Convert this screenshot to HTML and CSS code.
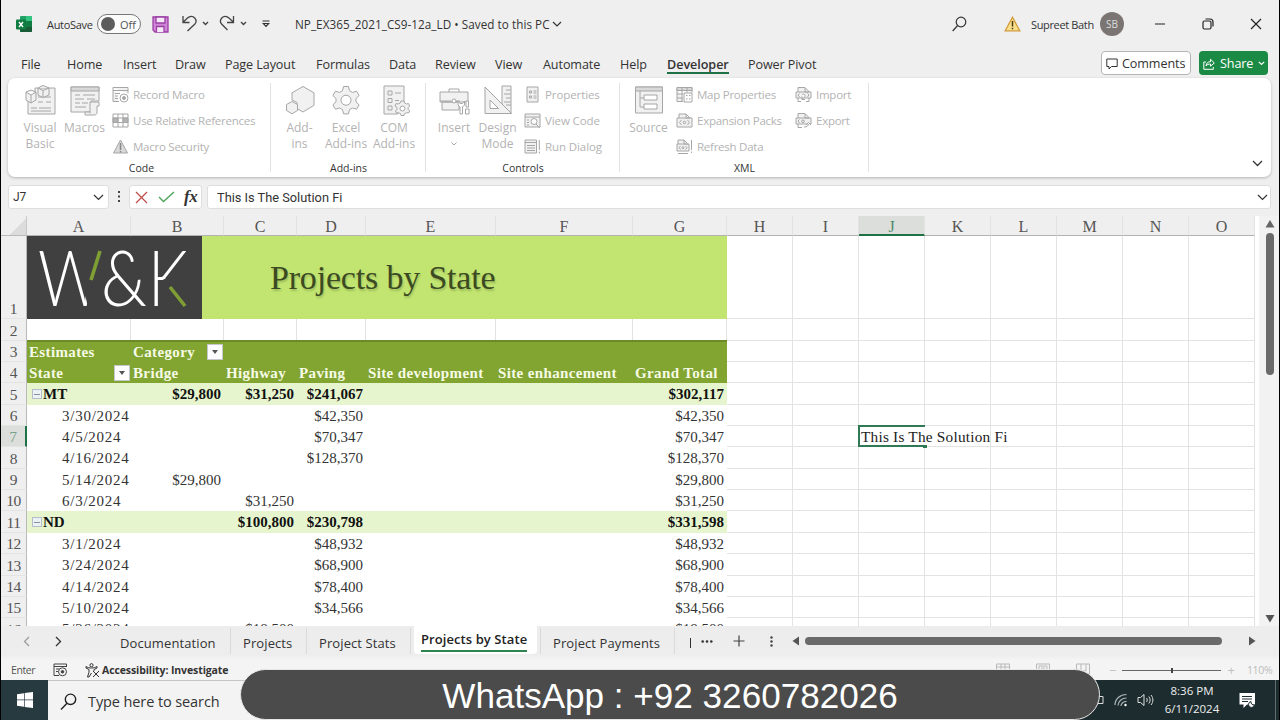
FILE: index.html
```html
<!DOCTYPE html>
<html lang="en">
<head>
  <meta charset="UTF-8">
  <title>NP_EX365_2021_CS9-12a_LD - Excel</title>
  <link rel="stylesheet" href="styles.css">
</head>
<body>

  <!-- TITLE BAR -->
  <div class="titlebar">
    <svg class="excel-logo" width="16" height="16" viewBox="0 0 16 16">
      <rect x="4" y="0" width="12" height="16" rx="1" fill="#21a366"/>
      <rect x="10" y="0" width="6" height="5" fill="#33c481"/>
      <rect x="4" y="8" width="12" height="8" rx="1" fill="#185c37"/>
      <rect x="10" y="5" width="6" height="6" fill="#107c41"/>
      <rect x="0" y="3.5" width="10" height="10" rx="1" fill="#107c41"/>
      <path d="M3 6l4 5M7 6l-4 5" stroke="#fff" stroke-width="1.4"/>
    </svg>
    <span class="autosave">AutoSave</span>
    <span class="toggle"><i></i>Off</span>
    <svg class="save" width="17" height="17" viewBox="0 0 17 17" fill="none" stroke="#9b3fa5" stroke-width="1.3">
      <path d="M1 1h15v15H3l-2-2z" fill="#cf86d6"/>
      <path d="M4 1h9v6H4zM4.500 16v-5.500h7.500V16" fill="#f6e9f7"/>
    </svg>
    <svg class="undo" width="28" height="18" viewBox="0 0 28 18" fill="none" stroke="#444" stroke-width="1.3">
      <path d="M2 1v6.500h6.500M2.300 7L6.500 3C9 .8 12 1.200 13.700 3c1.800 2 1.600 4.500 0 6.200L6.500 16"/>
      <path d="M22 7l2.500 2.500L27 7" stroke-width="1.400"/>
    </svg>
    <svg class="redo" width="28" height="18" viewBox="0 0 28 18" fill="none" stroke="#444" stroke-width="1.3">
      <path d="M14.500 1v6.500H8M14.200 7L10 3C7.500.8 4.500 1.200 2.800 3c-1.800 2-1.600 4.500 0 6.200L8.500 15"/>
      <path d="M22 7l2.500 2.500L27 7" stroke-width="1.400"/>
    </svg>
    <svg class="customize" width="8" height="8" viewBox="0 0 8 8" fill="none" stroke="#333" stroke-width="1.2">
      <path d="M.5 1h7M1.300 3.500h5.400L4 6.300z"/>
    </svg>
    <span class="doc-name">NP_EX365_2021_CS9-12a_LD • Saved to this PC</span>
    <svg class="doc-chevron" width="10" height="7" viewBox="0 0 10 7" fill="none" stroke="#333" stroke-width="1.2"><path d="M1 1l4 4 4-4"/></svg>
    <svg class="search" width="15" height="16" viewBox="0 0 15 16" fill="none" stroke="#333" stroke-width="1.2">
      <circle cx="9" cy="6" r="4.800"/><path d="M5.600 9.500L.7 15"/>
    </svg>
    <svg class="warning" width="17" height="16" viewBox="0 0 17 16">
      <path d="M8.500 1.300L15.800 14.800H1.200z" fill="#fbe08b" stroke="#d19a3a" stroke-width="1.300"/>
      <path d="M8.500 5v5.500M8.500 11.800v1.500" stroke="#4a3a12" stroke-width="1.500"/>
    </svg>
    <span class="user">Supreet Bath</span>
    <span class="avatar">SB</span>
    <div class="window-buttons">
      <svg width="12" height="12" viewBox="0 0 12 12"><path d="M1 6h10" stroke="#222"/></svg>
      <svg width="12" height="12" viewBox="0 0 12 12" fill="none" stroke="#222" stroke-width="1.200"><rect x="1" y="3" width="8" height="8" rx="1.500"/><path d="M3.500 1h4.500a3 3 0 0 1 3 3v4.500"/></svg>
      <svg width="12" height="12" viewBox="0 0 12 12"><path d="M1 1l10 10M11 1L1 11" stroke="#222" stroke-width="1.200"/></svg>
    </div>
  </div>

  <!-- RIBBON TABS -->
  <div class="tabs">
    <span>File</span><span>Home</span><span>Insert</span><span>Draw</span><span>Page Layout</span><span>Formulas</span><span>Data</span><span>Review</span><span>View</span><span>Automate</span><span>Help</span><span class="active">Developer</span><span>Power Pivot</span>
    <div class="btn comments">
      <svg width="12" height="12" viewBox="0 0 12 12" fill="none" stroke="#333"><path d="M.8 1h10.400v7.500H5.500L3 11V8.500H.8z"/></svg>
      Comments
    </div>
    <div class="btn share">
      <svg width="12" height="12" viewBox="0 0 12 12" fill="none" stroke="#fff"><path d="M3 4H.8v7.300h9.500V9M3 8c.3-3 2-4.300 4.500-4.300V1.300L11.300 5 7.500 8.200V6C5.500 6 4 6.500 3 8z"/></svg>
      Share
      <svg width="7" height="5" viewBox="0 0 7 5" fill="none" stroke="#fff" stroke-width="1.200"><path d="M.8.8l2.700 2.700L6.200.8"/></svg>
    </div>
  </div>

  <!-- RIBBON -->
  <div class="ribbon">
    <div class="group code">
      <div class="tools">
        <div class="big">
          <svg width="32" height="32" viewBox="0 0 32 32">
            <path class="f" d="M11 4h20v26H4V15h7z"/>
            <path d="M14 13h13M14 18h5M22 18h5M7 24h6M15 24h12M7 27h20"/>
            <path class="f" d="M2 8l5-2 5 2v8l-5 3-5-3zM2 8l5 3 5-3M7 11v8M14 4l5-2.500L25 4v7l-6 2.500-5-2.500zM14 4l5 2.500L25 4M19 6.500v7"/>
          </svg>
          Visual<br>Basic
        </div>
        <div class="big w45">
          <svg width="32" height="32" viewBox="0 0 32 32">
            <path class="f" d="M2 3h28v14H22v11H2z"/>
            <path class="d" d="M2 3h28v4H2z"/>
            <path d="M6 11h5M14 11h12M6 15h9M18 15h8M6 19h5M13 19h6M6 23h11"/>
            <path class="f" d="M21 18h9v4h-2v6c0 2-1 3-3 3h-9v-3h5zM21 28v1.500"/>
          </svg>
          Macros
        </div>
        <div class="smalls">
          <div class="small"><svg width="17" height="17" viewBox="0 0 17 17"><path class="f" d="M1 1.500h15v6M7 15.500H1v-14"/><path d="M1 4.500h15M3 7.500h5M3 10h3M3 12.500h3"/><circle cx="12" cy="12" r="4"/><circle class="s" cx="12" cy="12" r="1.500"/></svg>Record Macro</div>
          <div class="small"><svg width="17" height="17" viewBox="0 0 17 17"><path class="k2" d="M1 6h5v4.500H1zM11 6h5v4.500h-5z"/><path d="M1 2h15v13H1zM1 6h15M1 10.500h15M6 2v13M11 2v13"/></svg>Use Relative References</div>
          <div class="small"><svg width="17" height="17" viewBox="0 0 17 17"><path class="d" d="M8.500 2L15.500 15H1.500z"/><path class="k" d="M8.500 5v7M8.500 13V14.500"/></svg>Macro Security</div>
        </div>
      </div>
      <div class="caption">Code</div>
    </div>
    <div class="group addins">
      <div class="tools">
        <div class="big w45">
          <svg width="32" height="32" viewBox="0 0 32 32">
            <path class="f" d="M19 2.500l11 6.300v12.500L19 28l-6-3.500v-6L8 16V8.800z"/>
            <path class="f" d="M8 17.500l5.500 3v6L8 29.800l-5.500-3.300v-6z"/>
          </svg>
          Add-<br>ins
        </div>
        <div class="big w48">
          <svg width="32" height="32" viewBox="0 0 32 32">
            <path class="f" d="M13.500 2.500h5l1 4.200 3 1.700 4.100-1.200 2.500 4.300-3.100 3v3.400l3.100 3-2.500 4.300-4.100-1.200-3 1.700-1 4.200h-5l-1-4.200-3-1.700-4.100 1.200-2.500-4.300 3.100-3v-3.400l-3.100-3 2.500-4.300 4.100 1.200 3-1.700z"/>
            <circle class="w" cx="16" cy="16.200" r="5"/>
          </svg>
          Excel<br>Add-ins
        </div>
        <div class="big w48">
          <svg width="32" height="32" viewBox="0 0 32 32">
            <path class="f" d="M6 2h20v16l-6 4v8H6z"/>
            <path d="M10 7h4v4h-4zM17 9h6M10 14.500h4v4h-4zM17 16.500h4M10 22h4v4h-4z"/>
            <path class="f" d="M23 17h3l.5 2 2 1 2-.5 1.200 2.500-1.500 1.500v2l1.500 1.500-1.200 2-2-.3-2 1-.5 1.800h-3l-.5-1.800-2-1-2 .3-1-2 1.500-1.500v-2L17 22l1.200-2.500 2 .5 2-1z"/>
            <circle class="w" cx="24.500" cy="24.500" r="2.500"/>
          </svg>
          COM<br>Add-ins
        </div>
      </div>
      <div class="caption">Add-ins</div>
    </div>
    <div class="group controls">
      <div class="tools">
        <div class="big">
          <svg width="32" height="32" viewBox="0 0 32 32">
            <path class="f" d="M2 8h28v10H2zM4 18h17v8H4z"/>
            <path d="M11 8V5h10v3M2 17h11M18 17h4"/>
            <circle class="w" cx="16" cy="17" r="2"/>
            <path class="w" d="M20 17v4l2 2v7h2.500v-7l2-2v-4l-2 2.500h-2.500zM28 17h2.500v6H28zM27.500 25h3.500v5h-3.500z"/>
          </svg>
          Insert
          <svg class="down" width="6" height="4" viewBox="0 0 6 4"><path d="M.5.5L3 3 5.500.5"/></svg>
        </div>
        <div class="big w43">
          <svg width="32" height="32" viewBox="0 0 32 32">
            <path class="f" d="M20 2h9v27l-9-9zM3 3l26.500 26.500H3z"/>
            <path class="w" d="M8 16l8.500 8.500H8z"/>
            <path d="M24 6h5M22 10h7M24 14h5M22 18h7M24 21h5"/>
          </svg>
          Design<br>Mode
        </div>
        <div class="smalls">
          <div class="small"><svg width="17" height="17" viewBox="0 0 17 17"><path class="f" d="M3 1h11v15H3z"/><path d="M5.500 5h2v2h-2zM9.500 5h3M9.500 7h3M5.500 10h2v2h-2zM9.500 10h3M9.500 12h3"/></svg>Properties</div>
          <div class="small"><svg width="17" height="17" viewBox="0 0 17 17"><path class="f" d="M1 2h15v13H1z"/><path d="M1 5h15M3 8h2M3 10.500h2M3 13h2"/><circle class="w" cx="10" cy="9.500" r="3"/><path d="M12 12l4 4"/></svg>View Code</div>
          <div class="small"><svg width="17" height="17" viewBox="0 0 17 17"><path class="f" d="M1 2h11.500v13H1z"/><path d="M1 4.500h11.500M3 7.500h8M3 10h8M3 12.500h8M15.300 2v10M15.300 13.500v2"/></svg>Run Dialog</div>
        </div>
      </div>
      <div class="caption">Controls</div>
    </div>
    <div class="group xml">
      <div class="tools">
        <div class="big w45">
          <svg width="32" height="32" viewBox="0 0 32 32">
            <path class="f" d="M2.500 3h27v26h-27z"/>
            <path class="d" d="M2.500 3h27v4h-27z"/>
            <path d="M7 7v16h4M7 14h4"/>
            <path class="w" d="M11 11h13v5H11zM11 20h13v5H11z"/>
          </svg>
          Source
        </div>
        <div class="smalls maps">
          <div class="small"><svg width="17" height="17" viewBox="0 0 17 17"><path class="f" d="M1 1.500h15v5M7 15.500H1v-14"/><path class="d" d="M1 1.500h15v3H1z"/><path d="M6 1.500v14M11 1.500v5M1 8h6M1 12h6M8 7h8v9H8zM10 9.500h1.500M13 9.500h1.500M10 13h1.500M13 13h1.500"/></svg>Map Properties</div>
          <div class="small"><svg width="17" height="17" viewBox="0 0 17 17"><path class="f" d="M3 6V2h7l4 4M1 6h15v9H1z"/><path d="M10 2v4h4M5.500 8L3.500 10.500l2 2.500M11.500 8l2 2.500-2 2.500"/><circle cx="8.500" cy="10.500" r="1.300"/></svg>Expansion Packs</div>
          <div class="small"><svg width="17" height="17" viewBox="0 0 17 17"><path class="f" d="M2 6V2h6l3 3M1 6h12v7H1z"/><path d="M8 2v4h4M4.500 8l-1.500 1.500 1.500 2M9.500 8L11 9.500l-1.500 2M15.500 2v10M15.500 13.500V15M2 15.500h10"/><circle cx="7" cy="9.700" r="1"/></svg>Refresh Data</div>
        </div>
        <div class="smalls imports">
          <div class="small"><svg width="17" height="17" viewBox="0 0 17 17"><path class="f" d="M3 6V1.500h7l4 4V6M1 6h15v6H1z"/><path d="M10 2v4h4M4.500 7.500L3 9l1.500 2M12.500 7.500L14 9l-1.500 2M3 12v3.500h3M14 12v3.500h-3"/><path class="w" d="M7 9c2-2 4 0 2.500 2L7 13.500M7 10.500v3h3"/></svg>Import</div>
          <div class="small"><svg width="17" height="17" viewBox="0 0 17 17"><path class="f" d="M3 6V1.500h7l4 4V6M1 6h15v6H1z"/><path d="M10 2v4h4M4.500 7.500L3 9l1.500 2M3 12v3.500h4"/><circle cx="8" cy="9.300" r="1.300"/><path class="w" d="M9 15c3 0 4-1 4.500-3M11 13l2.500-2.500L16 13"/></svg>Export</div>
        </div>
      </div>
      <div class="caption">XML</div>
    </div>
    <svg class="collapse" width="11" height="7" viewBox="0 0 11 7"><path d="M1 1l4.500 4.500L10 1"/></svg>
  </div>

  <!-- FORMULA BAR -->
  <div class="formula-bar">
    <div class="box name-box">J7<svg width="11" height="7" viewBox="0 0 11 7" fill="none" stroke="#333" stroke-width="1.200"><path d="M1 1l4.500 4.500L10 1"/></svg></div>
    <svg class="dots" width="4" height="12" viewBox="0 0 4 12" fill="#444"><rect x="1" y="0" width="2" height="2"/><rect x="1" y="4.500" width="2" height="2"/><rect x="1" y="9" width="2" height="2"/></svg>
    <div class="box entry">
      <svg width="13" height="13" viewBox="0 0 13 13" stroke="#c0504d" stroke-width="1.300"><path d="M1 1l11 11M12 1L1 12"/></svg>
      <svg width="17" height="12" viewBox="0 0 17 12" fill="none" stroke="#4ea65a" stroke-width="1.400"><path d="M1 6l4.500 4.500L16 1"/></svg>
      <span class="fx">fx</span>
    </div>
    <div class="box formula"><span>This Is The Solution Fi</span><svg width="11" height="7" viewBox="0 0 11 7" fill="none" stroke="#333" stroke-width="1.200"><path d="M1 1l4.500 4.500L10 1"/></svg></div>
  </div>

  <!-- SHEET -->
  <div class="sheet-area">
    <div class="sheet" id="sheet"></div>
    <div class="vscroll">
      <svg width="10" height="8" viewBox="0 0 10 8" fill="#666"><path d="M5 0l4.500 7.500h-9z"/></svg>
      <div class="vthumb"></div>
      <svg width="10" height="8" viewBox="0 0 10 8" fill="#555"><path d="M5 7.500L.5 0h9z"/></svg>
    </div>
  </div>

  <!-- SHEET TABS -->
  <div class="sheet-tabs">
    <svg class="prev" width="7" height="11" viewBox="0 0 7 11" fill="none" stroke="#999" stroke-width="1.200"><path d="M6 1L1.500 5.500 6 10"/></svg>
    <svg class="next" width="7" height="11" viewBox="0 0 7 11" fill="none" stroke="#333" stroke-width="1.300"><path d="M1 1l4.500 4.500L1 10"/></svg>
    <span class="sheet-tab t1">Documentation</span>
    <span class="sheet-tab t2">Projects</span>
    <span class="sheet-tab t3">Project Stats</span>
    <span class="sheet-tab current"><b>Projects by State</b></span>
    <span class="sheet-tab t5">Project Payments</span>
    <span class="cut"></span>
    <svg class="more" width="12" height="3" viewBox="0 0 12 3" fill="#333"><circle cx="1.700" cy="1.500" r="1.300"/><circle cx="6" cy="1.500" r="1.300"/><circle cx="10.300" cy="1.500" r="1.300"/></svg>
    <svg class="plus" width="12" height="12" viewBox="0 0 12 12" stroke="#444" stroke-width="1.200"><path d="M6 .5v11M.5 6h11"/></svg>
    <svg class="vdots" width="3" height="11" viewBox="0 0 3 11" fill="#444"><circle cx="1.500" cy="1.500" r="1.200"/><circle cx="1.500" cy="5.500" r="1.200"/><circle cx="1.500" cy="9.500" r="1.200"/></svg>
    <svg class="left" width="8" height="10" viewBox="0 0 8 10" fill="#555"><path d="M.5 5L7 .5v9z"/></svg>
    <div class="hthumb"></div>
    <svg class="right" width="8" height="10" viewBox="0 0 8 10" fill="#555"><path d="M7.500 5L1 .5v9z"/></svg>
  </div>

  <!-- STATUS BAR -->
  <div class="statusbar">
    <span class="mode">Enter</span>
    <svg class="rec" width="15" height="14" viewBox="0 0 15 14" fill="none" stroke="#444"><path d="M6 12.500H1V1h12.500v3M1 3.500h12.500M3 6h3M3 8.500h2"/><circle cx="9.500" cy="8.800" r="4"/><circle cx="9.500" cy="8.800" r="1.300" fill="#444"/></svg>
    <svg class="acc" width="15" height="15" viewBox="0 0 15 15" fill="none" stroke="#333"><circle cx="6.500" cy="2.200" r="1.600"/><path d="M1 3.500c3 2 8 2 11 0v1.500L9 6.500V8M1 3.500V5l3 1.500v2.700L2.500 14H4l2.500-4M8 8l6 6M14 8l-6 6"/></svg>
    <b class="acc-label">Accessibility: Investigate</b>
    <div class="views">
      <svg width="14" height="12" viewBox="0 0 14 12"><path d="M.5 1h13v10H.5zM.5 4h13M5 1v10M9 1v10"/></svg>
      <svg width="14" height="12" viewBox="0 0 14 12"><path d="M.5 1h13v10H.5zM3 3h8v8H3zM5 5h4"/></svg>
      <svg width="14" height="12" viewBox="0 0 14 12"><path d="M.5 1h13v10H.5zM5 1v7M10 1v7M5 8h5"/></svg>
    </div>
    <div class="zoom"><span>−</span><i></i><span>+</span></div>
    <span class="percent">110%</span>
  </div>

  <!-- TASKBAR -->
  <div class="taskbar">
    <div class="start"><svg width="16" height="16" viewBox="0 0 16 16" fill="#fff"><path d="M0 2.200L7 1.200v6.400H0zM7.700 1.100L16 0v7.600H7.700zM0 8.300h7v6.500l-7-1zM7.700 8.300H16V16l-8.300-1.100z"/></svg></div>
    <div class="search-box">
      <svg width="17" height="17" viewBox="0 0 17 17" fill="none" stroke="#222" stroke-width="1.400"><circle cx="10.500" cy="6.300" r="5.200"/><path d="M7 10.200L1 16.500"/></svg>
      Type here to search
    </div>
    <div class="tray">
      <svg width="6" height="10" viewBox="0 0 6 10" fill="none" stroke="#ddd"><path d="M0 1.500h5v7H0"/></svg>
      <svg class="wifi" width="14" height="14" viewBox="0 0 14 14" fill="none" stroke="#aab4b4" stroke-width="1.200"><path d="M1 12C1 6 6 1.500 12.500 1.500M4 12.500c0-4 4-7.500 8.500-7.500M7 13c0-2.500 2.500-4.700 5.500-4.700"/><circle cx="11.500" cy="12" r="1.200" fill="#fff" stroke="none"/></svg>
      <svg class="sound" width="17" height="14" viewBox="0 0 17 14" fill="none" stroke="#ddd"><path d="M1 4.500h2.500L7 1.500v11L3.500 9.500H1zM9.500 5c1 1.300 1 2.700 0 4M11.800 3.500c1.800 2.300 1.800 4.700 0 7M14 2c2.500 3.300 2.500 6.700 0 10"/></svg>
      <div class="clock">8:36 PM<br>6/11/2024</div>
      <svg class="notif" width="17" height="17" viewBox="0 0 17 17"><path d="M.5 1h15.500v11.500H8L4.500 16v-3.500h-4z" fill="#fff"/><path d="M3 4.500h10M3 7h10M3 9.500h6" stroke="#1d2c2f"/><path d="M12 9.500a3 3 0 1 0 3.500 3.500a3 3 0 0 1-3.500-3.500z" fill="#fff" stroke="#1d2c2f"/></svg>
      <div class="show-desktop"></div>
    </div>
  </div>

  <div class="banner">WhatsApp : +92 3260782026</div>

  <script>
    const COLS = 'ABCDEFGHIJKLMNO'.split('');
    const sheet = document.getElementById('sheet');

    // row number -> column -> text
    const DATA = {
      3: { A: 'Estimates', B: 'Category' },
      4: { A: 'State', B: 'Bridge', C: 'Highway', D: 'Paving', E: 'Site development', F: 'Site enhancement', G: 'Grand Total' },
      5: { A: 'MT', B: '$29,800', C: '$31,250', D: '$241,067', G: '$302,117' },
      6: { A: '3/30/2024', D: '$42,350', G: '$42,350' },
      7: { A: '4/5/2024', D: '$70,347', G: '$70,347', J: 'This Is The Solution Fi' },
      8: { A: '4/16/2024', D: '$128,370', G: '$128,370' },
      9: { A: '5/14/2024', B: '$29,800', G: '$29,800' },
      10: { A: '6/3/2024', C: '$31,250', G: '$31,250' },
      11: { A: 'ND', C: '$100,800', D: '$230,798', G: '$331,598' },
      12: { A: '3/1/2024', D: '$48,932', G: '$48,932' },
      13: { A: '3/24/2024', D: '$68,900', G: '$68,900' },
      14: { A: '4/14/2024', D: '$78,400', G: '$78,400' },
      15: { A: '5/10/2024', D: '$34,566', G: '$34,566' },
      16: { A: '5/26/2024', C: '$18,500', G: '$18,500' }
    };

    // the missing strokes of W and K are covered, then drawn as green slashes
    const LOGO = `
      <div class="wk-logo">
        <svg width="175" height="83" viewBox="0 0 175 83">
          <text class="wk" x="11" y="70" textLength="64" lengthAdjust="spacingAndGlyphs">W</text>
          <path class="cover" d="M48.500 12h34v60H61z"/>
          <text class="wk" x="74" y="70" textLength="46" lengthAdjust="spacingAndGlyphs">&amp;</text>
          <text class="wk" x="121" y="70" textLength="40" lengthAdjust="spacingAndGlyphs">K</text>
          <path class="cover" d="M132.500 45.500l9-4.500 24 25v7h-33z"/>
          <path class="slash" d="M73 15L64 44M143 51l15 19"/>
        </svg>
      </div>`;

    function add(cls, html) {
      const el = document.createElement('div');
      el.className = cls;
      el.innerHTML = html || '';
      sheet.appendChild(el);
    }

    function rowClass(r) {
      if (r === 3 || r === 4) return 'head head' + r;
      if (r === 5 || r === 11) return 'state';
      return r > 4 ? 'detail' : 'blank';
    }

    add('corner');
    COLS.forEach(c => add('col' + (c === 'J' ? ' selected' : ''), c));

    for (let r = 1; r <= 16; r++) {
      add('row' + (r === 7 ? ' selected' : ''), r);
      COLS.forEach(c => {
        if (r === 1 && c <= 'G') {
          if (c === 'A') add('title-cell', LOGO + '<span>Projects by State</span>');
          return;
        }
        let text = (DATA[r] || {})[c] || '';
        if (c === 'A' && rowClass(r) === 'state') text = '<i class="collapse-box"></i>' + text;
        if ((r === 3 && c === 'B') || (r === 4 && c === 'A')) text += '<i class="filter"></i>';
        if (r === 7 && c === 'J') text = '<span>' + text + '</span>';
        const kind = c <= 'G' ? 'pivot ' + rowClass(r) + ' c' + c : 'plain';
        add('cell ' + kind + (r === 7 && c === 'J' ? ' editing' : ''), text);
      });
    }
  </script>

</body>
</html>
```
FILE: styles.css
```css
* {
  box-sizing: border-box;
}

body {
  margin: 0;
  width: 1280px;
  height: 720px;
  overflow: hidden;
  background: #efefef;
  border-left: 1px solid #000;
  border-right: 1px solid #000;
  font-family: 'Open Sans', 'Noto Sans', sans-serif;
  color: #333;
  display: flex;
  flex-direction: column;
  position: relative;
}

svg {
  display: block;
  flex: none;
}

/* title bar */
.titlebar {
  height: 48px;
  flex: none;
  display: flex;
  align-items: center;
  padding-left: 15px;
  font-size: 11px;
  white-space: nowrap;
}

.autosave {
  width: 50px;
  margin-left: 15px;
  letter-spacing: -0.3px;
}

.toggle {
  width: 44px;
  height: 20px;
  border: 1px solid #777;
  border-radius: 10px;
  background: #fbfbfb;
  display: flex;
  align-items: center;
  gap: 5px;
  padding-left: 3px;
  color: #555;
}

.toggle i {
  width: 14px;
  height: 14px;
  border-radius: 50%;
  background: #5c5c5c;
}

.save { margin-left: 11px; }
.undo { margin-left: 12px; }
.redo { margin-left: 10px; }
.customize { margin-left: 15px; }

.doc-name {
  width: 257px;
  margin-left: 25px;
  font-size: 11.7px;
  letter-spacing: 0.05px;
}

.doc-chevron { margin-left: 0; }
.search { margin-left: 390px; }
.warning { margin-left: 37px; }

.user {
  width: 60px;
  margin-left: 10px;
  letter-spacing: -0.35px;
}

.avatar {
  width: 24px;
  height: 24px;
  margin-left: 9px;
  border-radius: 50%;
  background: #7a7573;
  color: #ddd;
  font-size: 10px;
  line-height: 24px;
  text-align: center;
}

.window-buttons {
  display: flex;
  gap: 36px;
  margin-left: 30px;
}

/* ribbon tabs */
.tabs {
  height: 30px;
  flex: none;
  display: grid;
  grid-template-columns: 46px 56px 52px 50px 91px 73px 46px 60px 48px 77px 47px 81px 353px 98px 69px;
  padding-left: 20px;
  font-size: 12.6px;
  line-height: 33px;
  letter-spacing: -0.1px;
  white-space: nowrap;
}

.tabs .active {
  justify-self: start;
  height: 26px;
  font-weight: 600;
  letter-spacing: -0.05px;
  border-bottom: 2px solid #1e7145;
}

.btn {
  height: 24px;
  margin-top: 3px;
  border-radius: 4px;
  display: flex;
  align-items: center;
  line-height: 22px;
}

.comments {
  width: 90px;
  border: 1px solid #b5b5b5;
  background: #fff;
  padding: 1px 0 0 4px;
  gap: 4px;
}

.share {
  width: 69px;
  background: #1a8a45;
  color: #fff;
  padding: 1px 0 0 4px;
  gap: 5px;
}

/* ribbon */
.ribbon {
  height: 99px;
  flex: none;
  margin: 0 8px 0 7px;
  background: #fff;
  border-radius: 7px;
  box-shadow: 0 1px 3px rgba(0, 0, 0, 0.25);
  display: flex;
  position: relative;
  color: #b3b3b3;
}

.group {
  position: relative;
  padding-top: 4px;
}

.group::after {
  content: '';
  position: absolute;
  right: 0;
  top: 5px;
  width: 1px;
  height: 89px;
  background: #e2e2e2;
}

.code { width: 263px; padding: 4px 6px 0 10px; }
.addins { width: 155px; padding: 4px 6px 0; }
.controls { width: 194px; padding: 4px 6px 0; }
.xml { width: 249px; padding: 4px 6px 0; }

.tools {
  display: flex;
  height: 79px;
}

.big {
  width: 44px;
  flex: none;
  display: flex;
  flex-direction: column;
  align-items: center;
  text-align: center;
  font-size: 12px;
  line-height: 16px;
  padding-top: 2px;
  white-space: nowrap;
}

.big > svg:first-child {
  margin-bottom: 4px;
}

.w43 { width: 43px; }
.w45 { width: 45px; }
.w48 { width: 48px; }

.ribbon svg {
  fill: none;
  stroke: #a6a6a6;
}

.ribbon .f { fill: #f1f1f1; }
.ribbon .d { fill: #d9d9d9; }
.ribbon .w { fill: #fff; }
.ribbon .s { fill: #a6a6a6; }
.ribbon .k { stroke: #888; stroke-width: 1.5; }
.ribbon .k2 { fill: #b4b4b4; }

.ribbon .down {
  margin-top: 6px;
}

.smalls {
  margin: -1px 0 0 5px;
  flex: none;
}

.maps {
  width: 115px;
}

.small {
  height: 26px;
  display: flex;
  align-items: center;
  gap: 4px;
  font-size: 11.5px;
  letter-spacing: -0.25px;
  white-space: nowrap;
}

.controls .small {
  letter-spacing: -0.1px;
}

.imports {
  margin-left: 4px;
}

.caption {
  font-size: 10.5px;
  line-height: 14px;
  color: #333;
  text-align: center;
}

.ribbon .collapse {
  position: absolute;
  right: 8px;
  bottom: 10px;
  stroke: #333;
  stroke-width: 1.3;
}

/* formula bar */
.formula-bar {
  height: 39px;
  flex: none;
  padding: 8px 8px 0 7px;
  display: flex;
  font-size: 12px;
}

.box {
  height: 24px;
  background: #fff;
  border: 1px solid #dedede;
  border-radius: 3px;
  display: flex;
  align-items: center;
}

.name-box {
  width: 101px;
  padding: 0 4px;
  justify-content: space-between;
  font-family: Roboto, sans-serif;
}

.dots {
  margin: 6px 8px 0;
}

.entry {
  width: 73px;
  padding-left: 5px;
  gap: 10px;
}

.fx {
  font: italic bold 17px 'Liberation Serif', serif;
  letter-spacing: -0.5px;
  margin-left: -1px;
}

.formula {
  flex: 1;
  margin-left: 5px;
  padding: 0 2px 0 9px;
  justify-content: space-between;
  font-family: Roboto, sans-serif;
  font-size: 12.8px;
}

/* sheet */
.sheet-area {
  height: 410px;
  flex: none;
  display: flex;
  overflow: hidden;
  font-family: 'Liberation Serif', serif;
}

.sheet {
  width: 1258px;
  flex: none;
  display: grid;
  grid-template-columns: 26px 104px 93px 73px 69px 130px 137px 94px repeat(8, 66px);
  grid-template-rows: 20px 83.4px repeat(15, 21.35px);
  background: #fff;
}

.corner {
  background: linear-gradient(135deg, transparent 62%, #dcdcdc 62%) #efefef;
  border-right: 1px solid #c9c9c9;
  border-bottom: 1px solid #b9b9b9;
}

.col {
  background: #efefef;
  border-right: 1px solid #e2e2e2;
  border-bottom: 1px solid #b3b3b3;
  font-size: 16px;
  line-height: 21px;
  text-align: center;
  color: #555;
}

.row {
  background: #efefef;
  border-right: 1px solid #b9b9b9;
  border-bottom: 1px solid #e4e4e4;
  display: flex;
  align-items: flex-end;
  justify-content: center;
  font-size: 15.5px;
  line-height: 19px;
  letter-spacing: -0.4px;
  color: #555;
}

.col.selected {
  background: #dcdedc;
  color: #4f8a6b;
  border-bottom: 2px solid #1e7145;
}

.row.selected {
  background: #dcdedc;
  color: #7aa38c;
  border-right: 2px solid #1e7145;
}

.title-cell {
  grid-column: 2 / 9;
  display: flex;
  background: #c1e570;
}

.wk-logo {
  width: 175px;
  background: #404040;
}

.wk-logo svg {
  overflow: visible;
}

.wk {
  font-family: Lato, sans-serif;
  font-weight: 300;
  font-size: 76px;
  fill: #fff;
}

.cover {
  fill: #404040;
}

.slash {
  stroke: #7f9f35;
  stroke-width: 3.6;
}

.title-cell span {
  margin-left: 68px;
  font-size: 34px;
  line-height: 83px;
  letter-spacing: -0.18px;
  color: #3b4a22;
  text-shadow: 1px 2px 2px rgba(0, 0, 0, 0.18);
}

.cell {
  font-size: 15px;
  line-height: 22px;
  white-space: nowrap;
  position: relative;
}

.plain {
  border-right: 1px solid #e3e3e3;
  border-bottom: 1px solid #e3e3e3;
}

.pivot {
  padding-right: 3px;
  text-align: right;
}

.blank {
  border-right: 1px solid #e3e3e3;
}

.head {
  background: #82a431;
  color: #f6fbe6;
  font-weight: bold;
  text-align: left;
  padding-left: 2px;
  letter-spacing: 0.37px;
}

/* starts on the line above, under a darker edge */
.head3 {
  margin-top: -1px;
  box-shadow: inset 0 2px #6c8a27;
  line-height: 25px;
}

.state {
  background: #e7f5cf;
  color: #111;
  font-weight: bold;
}

.cA {
  text-align: left;
}

.state.cA {
  padding-left: 5px;
}

.detail.cA {
  padding-left: 35px;
  letter-spacing: 0.75px;
}

.collapse-box {
  display: inline-block;
  width: 10px;
  height: 10px;
  margin-right: 1px;
  border: 1px solid #b5bfc9;
  background: linear-gradient(#8795a3, #8795a3) center / 6px 1px no-repeat #eef1f4;
}

.filter {
  position: absolute;
  right: 1px;
  top: 4px;
  width: 16px;
  height: 16px;
  background: #fdfdfd;
  border: 1px solid #c4c8cc;
}

.filter::after {
  content: '';
  position: absolute;
  left: 4px;
  top: 5px;
  border: 3px solid transparent;
  border-top: 4px solid #555;
  border-bottom: 0;
}

.head4 .filter {
  top: 3px;
}

.editing {
  z-index: 1;
  border: 0;
}

.editing::before {
  content: '';
  position: absolute;
  inset: -1px 0 0 -1px;
  border: 2px solid #2f7a55;
  border-right: 0;
}

.editing::after {
  content: '';
  position: absolute;
  right: -2px;
  bottom: -1px;
  width: 4px;
  height: 3px;
  background: #2f7a55;
}

.editing span {
  position: relative;
  display: inline-block;
  height: 19px;
  margin-left: 2px;
  padding-right: 4px;
  line-height: 22px;
  font-size: 15.3px;
  letter-spacing: 0.22px;
  color: #222;
}

/* vertical scrollbar */
.vscroll {
  width: 20px;
  background: #f2f2f2;
  display: flex;
  flex-direction: column;
  align-items: center;
  padding: 4px 0 3px 2px;
}

.vthumb {
  width: 8px;
  height: 142px;
  margin: 5px 0 auto;
  border-radius: 4px;
  background: #6a6a6a;
}

/* sheet tabs */
.sheet-tabs {
  height: 34px;
  flex: none;
  display: flex;
  align-items: center;
  padding-bottom: 4px;
  font-size: 13px;
  background: linear-gradient(#ededed 29px, #f4f4f4 34px);
}

.prev { margin-left: 22px; }
.next { margin-left: 25px; }

.sheet-tab {
  height: 26px;
  flex: none;
  line-height: 30px;
  border-right: 1px solid #dadada;
  white-space: nowrap;
  letter-spacing: 0.1px;
}

.t1 { width: 112px; margin-left: 57px; padding-left: 1px; }
.t2 { width: 76px; padding-left: 12px; }
.t3 { width: 104px; padding-left: 12px; }

.current {
  width: 123px;
  height: 28px;
  margin-left: 3px;
  padding-left: 7px;
  border: 0;
  border-radius: 0 0 4px 4px;
  background: #fff;
  line-height: 23px;
  align-self: flex-start;
}

.current b {
  display: inline-block;
  margin-top: 2px;
  font-weight: 600;
  letter-spacing: 0.08px;
  line-height: 22px;
  border-bottom: 2px solid #2f8550;
  color: #222;
}

.t5 { width: 135px; padding-left: 12px; border-left: 1px solid #dadada; margin-left: 3px; }

.cut {
  width: 1px;
  height: 10px;
  margin-left: 15px;
  margin-top: 4px;
  background: #333;
}

.more { margin-left: 10px; }
.plus { margin-left: 20px; }
.vdots { margin-left: 25px; }
.left { margin-left: 19px; }

.hthumb {
  width: 417px;
  height: 8px;
  margin-left: 5px;
  border-radius: 4px;
  background: #6a6a6a;
}

.right { margin-left: 26px; }

/* status bar */
.statusbar {
  height: 20px;
  flex: none;
  display: flex;
  align-items: center;
  background: #f4f4f4;
  font-size: 10.5px;
  white-space: nowrap;
}

.mode {
  width: 32px;
  margin-left: 10px;
  letter-spacing: -0.4px;
  color: #555;
}

.rec { margin-left: 10px; }
.acc { margin-left: 17px; }

.acc-label {
  width: 126px;
  margin-left: 2px;
  letter-spacing: -0.1px;
  font-weight: 700;
}

.views {
  display: flex;
  gap: 26px;
  margin-left: 768px;
}

.views svg {
  margin-top: -3px;
  fill: none;
  stroke: #b9b9b9;
}

.zoom {
  display: flex;
  align-items: center;
  gap: 6px;
  margin-left: 19px;
  font-size: 13px;
  color: #c0c0c0;
}

.zoom i {
  width: 99px;
  height: 5px;
  background:
    linear-gradient(#444, #444) center / 2px 5px no-repeat,
    linear-gradient(#666, #666) center / 100% 1px no-repeat;
}

.percent {
  margin-left: 12px;
  letter-spacing: -0.3px;
  color: #bdbdbd;
}

/* taskbar */
.taskbar {
  height: 40px;
  flex: none;
  display: flex;
  background: #1d2c2f;
}

.start {
  width: 47px;
  display: flex;
  align-items: center;
  justify-content: center;
  background: #263a3f;
}

.search-box {
  width: 344px;
  display: flex;
  align-items: center;
  gap: 11px;
  padding: 1px 0 0 12px;
  border-top: 1px solid #c6c6c6;
  background: #f3f3f3;
  font-size: 14.5px;
  letter-spacing: -0.1px;
}

.tray {
  flex: 1;
  display: flex;
  align-items: center;
  justify-content: flex-end;
}

.wifi { margin-left: 10px; }
.sound { margin-left: 9px; }

.clock {
  width: 60px;
  margin-left: 8px;
  color: #eee;
  font-size: 11.5px;
  line-height: 18px;
  letter-spacing: 0;
  text-align: center;
}

.notif { margin-left: 17px; }

.show-desktop {
  width: 4px;
  height: 40px;
  margin-left: 19px;
  border-left: 1px solid #5f6b6d;
}

/* caption over the taskbar */
.banner {
  position: absolute;
  left: 239px;
  top: 669px;
  width: 860px;
  height: 51px;
  border: 1px solid #e8e8e8;
  border-radius: 26px;
  background: #4b4b4b;
  color: #fff;
  font-family: 'Liberation Sans', sans-serif;
  font-size: 35.1px;
  line-height: 52px;
  text-align: center;
}
```
